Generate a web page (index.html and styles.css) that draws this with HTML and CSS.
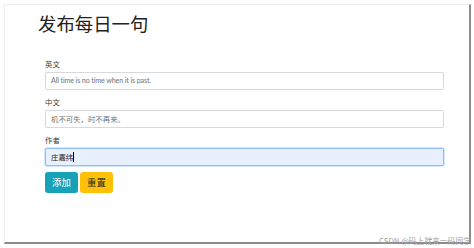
FILE: index.html
```html
<!DOCTYPE html>
<html lang="zh-CN">
<head>
<meta charset="utf-8">
<title>发布每日一句</title>
<link rel="stylesheet" href="styles.css">
</head>
<body>
<div class="frame">
  <div class="content">
    <h1 class="title">发布每日一句</h1>
    <form class="form">
      <div class="group">
        <label class="label">英文</label>
        <div class="control placeholder latin">All time is no time when it is past.</div>
      </div>
      <div class="group">
        <label class="label">中文</label>
        <div class="control placeholder">机不可失，时不再来。</div>
      </div>
      <div class="group">
        <label class="label">作者</label>
        <div class="control focused">庄嘉纬<span class="caret"></span></div>
      </div>
      <div class="actions">
        <button type="button" class="btn btn-info">添加</button>
        <button type="button" class="btn btn-warning">重置</button>
      </div>
    </form>
  </div>
  <div class="watermark">CSDN @码上就来一码同学</div>
</div>
</body>
</html>
```
FILE: styles.css
```css
html, body {
  margin: 0;
  padding: 0;
  background: #fff;
}
body {
  font-family: "Lato", "Noto Sans CJK SC", sans-serif;
  color: #212529;
  width: 474px;
  height: 248px;
  overflow: hidden;
}
.frame {
  position: relative;
  box-sizing: border-box;
  margin: 4px 0 0 4px;
  width: 467px;
  height: 240px;
  border-top: 1px solid #ececec;
  border-left: 1px solid #ececec;
  border-right: 2px solid #8c8c8c;
  border-bottom: 2px solid #8c8c8c;
}
.content {
  padding: 7px 25px 0 33px;
}
.title {
  margin: 0;
  font-family: "Noto Sans CJK SC", sans-serif;
  font-weight: 400;
  font-size: 18.4px;
  line-height: 22px;
  color: #222;
}
.form {
  margin: 24px 0 0 7px;
}
.group {
  margin-bottom: 6px;
}
.label {
  display: block;
  font-family: "Noto Sans CJK SC", sans-serif;
  font-size: 7.4px;
  line-height: 11px;
  color: #3a3a3a;
  margin-bottom: 3px;
}
.control {
  box-sizing: border-box;
  height: 18px;
  border: 1px solid #d6dade;
  border-radius: 2px;
  padding: 0 5px;
  font-family: "Noto Sans CJK SC", sans-serif;
  font-size: 7.4px;
  line-height: 16px;
  background: #fff;
  white-space: nowrap;
}
.latin {
  font-family: "Lato", sans-serif;
  font-size: 7.2px;
  letter-spacing: -0.15px;
}
.placeholder {
  color: #6c757d;
}
.focused {
  background: #e8f0fe;
  border-color: #8fbff5;
  box-shadow: 0 0 0 1px rgba(0, 123, 255, 0.18);
  color: #212529;
}
.caret {
  display: inline-block;
  width: 1px;
  height: 10px;
  background: #000;
  vertical-align: -2px;
}
.actions {
  display: flex;
  gap: 2px;
}
.btn {
  box-sizing: border-box;
  height: 21px;
  width: 33px;
  padding: 0;
  border: 1px solid transparent;
  border-radius: 2.5px;
  font-family: "Noto Sans CJK SC", sans-serif;
  font-size: 9.4px;
  line-height: 19px;
  cursor: pointer;
}
.btn-info {
  background: #17a2b8;
  border-color: #17a2b8;
  color: #fff;
}
.btn-warning {
  background: #ffc107;
  border-color: #ffc107;
  color: #212529;
}
.watermark {
  position: absolute;
  right: -2px;
  bottom: -4px;
  font-family: "Noto Sans CJK SC", sans-serif;
  font-size: 7.8px;
  line-height: 10px;
  color: #a0a0a0;
  white-space: nowrap;
}
```
